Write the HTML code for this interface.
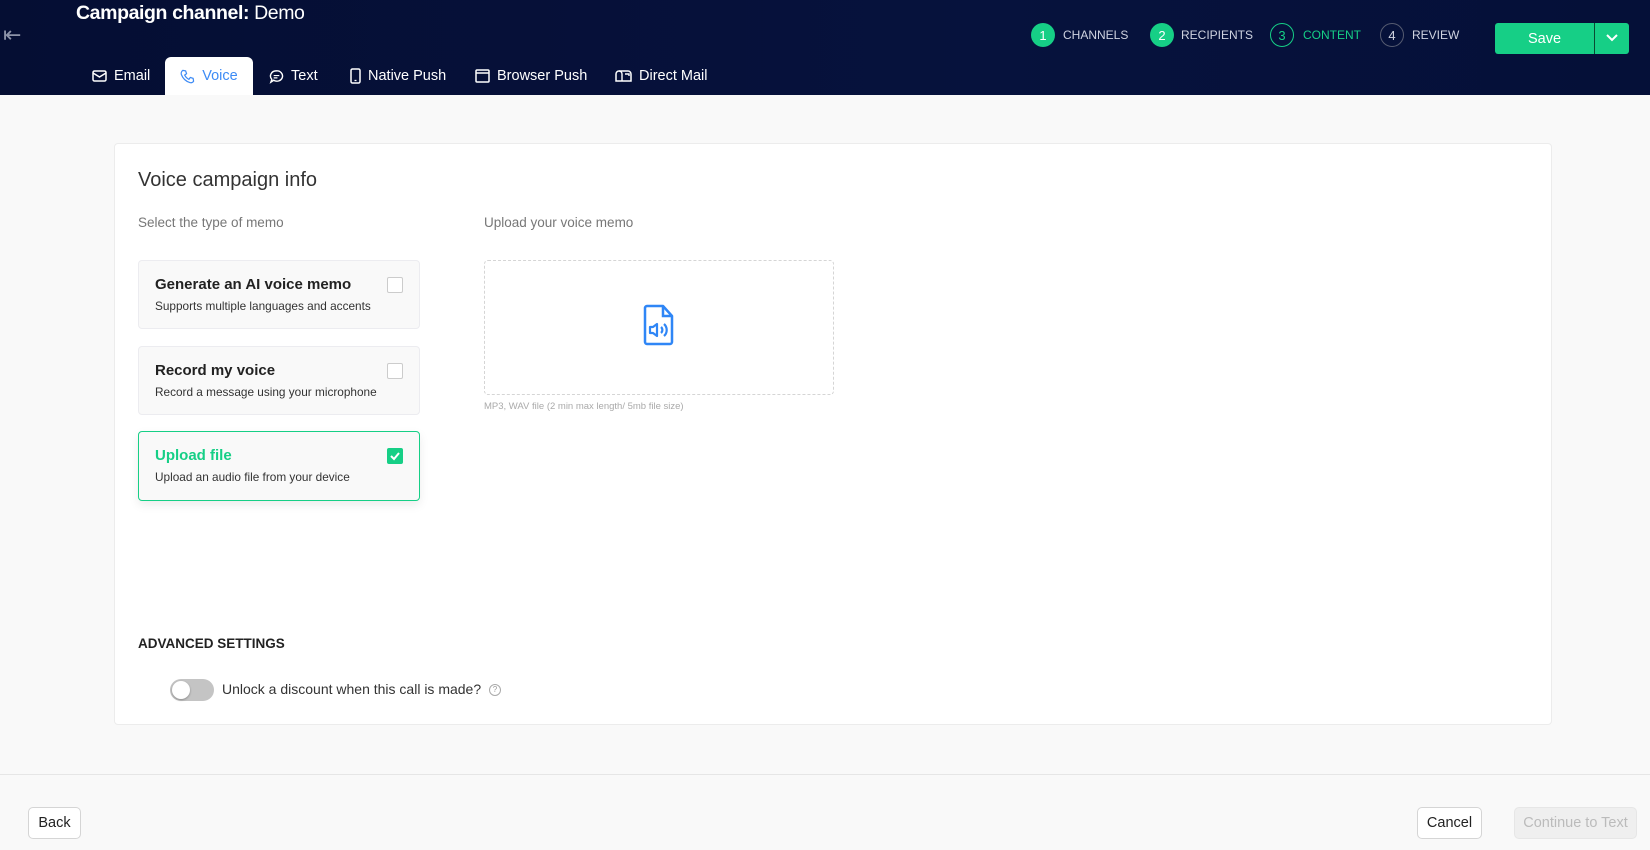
<!DOCTYPE html>
<html><head><meta charset="utf-8"><style>
*{box-sizing:border-box;margin:0;padding:0}
body{width:1650px;height:850px;overflow:hidden;background:#f9f9f9;font-family:"Liberation Sans",sans-serif;color:#222;position:relative}
.hdr{position:absolute;left:0;top:0;width:1650px;height:95px;background:linear-gradient(90deg,#050e33,#06123d 60%,#051038)}
.abs{position:absolute}
.title{left:76px;top:2px;font-size:19.5px;color:#fff;letter-spacing:-0.4px}
.tab{top:57px;height:38px;font-size:14.5px;color:#fff;display:flex;align-items:center}
.tab svg{margin-right:7px}
.vt{left:165px;width:88px;background:#fff;border-radius:6px 6px 0 0;color:#3d8bf5;justify-content:center}
.circ{width:24px;height:24px;border-radius:50%;background:#16cf86;color:#fff;font-size:13px;display:flex;align-items:center;justify-content:center;top:23px}
.st{top:28px;font-size:12px;color:#cfd3e0}
.card{left:114px;top:143px;width:1438px;height:582px;background:#fff;border:1px solid #ececec;border-radius:4px}
.opt{left:138px;width:282px;background:#f9f9f9;border:1px solid #ececf0;border-radius:4px}
.opt b{position:absolute;left:16px;top:15px;font-size:15px;color:#222}
.opt span{position:absolute;left:16px;top:38px;font-size:11.8px;color:#333}
.cb{position:absolute;right:16px;top:16px;width:16px;height:16px;border:1px solid #ccc;border-radius:2px;background:#fff}
.btn{border:1px solid #d5d5d5;border-radius:5px;background:#fff;font-size:14.5px;display:flex;align-items:center;justify-content:center;top:807px;height:32px}
</style></head><body>
<div class="hdr"></div>
<div class="abs" style="left:3px;top:22px;color:#8d93a8;font-size:22px">⇤</div>
<div class="abs title"><b>Campaign channel:</b> Demo</div>

<div class="abs tab" style="left:92px"><svg width="15" height="12" viewBox="0 0 15 12"><rect x="1" y="1" width="13" height="10" rx="1.5" fill="none" stroke="#fff" stroke-width="1.5"/><path d="M1 3l6.5 4L14 3" fill="none" stroke="#fff" stroke-width="1.5"/></svg>Email</div>
<div class="abs tab vt"><svg width="15" height="15" viewBox="0 0 16 16"><path d="M3 1.5l3 .5 1 3-2 1.5c1 2 2.5 3.5 4.5 4.5L11 9l3 1 .5 3c-1 1.5-2.5 2-4 1.5C6 13 3 10 1.5 6 1 4.5 1.5 2.5 3 1.5z" fill="none" stroke="#3d8bf5" stroke-width="1.3"/></svg>Voice</div>
<div class="abs tab" style="left:269px"><svg width="15" height="15" viewBox="0 0 16 16"><path d="M8 2a6 5.5 0 1 1-3 10L2 14l1-3A6 5.5 0 0 1 8 2z" fill="none" stroke="#fff" stroke-width="1.5"/><path d="M5 7h6M5 9.5h4" stroke="#fff" stroke-width="1.3"/></svg>Text</div>
<div class="abs tab" style="left:350px"><svg width="11" height="16" viewBox="0 0 11 16"><rect x="1" y="1" width="9" height="14" rx="1.5" fill="none" stroke="#fff" stroke-width="1.5"/><path d="M4.5 12.5h2" stroke="#fff" stroke-width="1.3"/></svg>Native Push</div>
<div class="abs tab" style="left:475px"><svg width="15" height="14" viewBox="0 0 15 14"><rect x="1" y="1" width="13" height="12" rx="1" fill="none" stroke="#fff" stroke-width="1.5"/><path d="M1 4h13" stroke="#fff" stroke-width="1.5"/></svg>Browser Push</div>
<div class="abs tab" style="left:615px"><svg width="17" height="14" viewBox="0 0 17 14"><path d="M4 2h9a3 3 0 0 1 3 3v7H1V5a3 3 0 0 1 3-3z" fill="none" stroke="#fff" stroke-width="1.5"/><path d="M7 12V5a3 3 0 0 0-3-3M10 5h4v2" fill="none" stroke="#fff" stroke-width="1.4"/></svg>Direct Mail</div>

<div class="abs circ" style="left:1031px">1</div><div class="abs st" style="left:1063px">CHANNELS</div>
<div class="abs circ" style="left:1150px">2</div><div class="abs st" style="left:1181px">RECIPIENTS</div>
<div class="abs circ" style="left:1270px;background:none;border:1px solid #16cf86;color:#16cf86">3</div><div class="abs st" style="left:1303px;color:#16cf86">CONTENT</div>
<div class="abs circ" style="left:1380px;background:none;border:1px solid #555b70;color:#cfd3e0">4</div><div class="abs st" style="left:1412px">REVIEW</div>
<div class="abs" style="left:1495px;top:23px;width:134px;height:31px;background:#16cf86;border-radius:3px"></div>
<div class="abs" style="left:1495px;top:23px;width:99px;height:31px;color:#fff;font-size:14.5px;display:flex;align-items:center;justify-content:center">Save</div>
<div class="abs" style="left:1594px;top:23px;width:1px;height:31px;background:#0a4a33"></div>
<svg class="abs" style="left:1605px;top:33px" width="14" height="10" viewBox="0 0 14 10"><path d="M2 2l5 5 5-5" fill="none" stroke="#fff" stroke-width="2"/></svg>

<div class="abs card"></div>
<div class="abs" style="left:138px;top:169px;font-size:20px;color:#333">Voice campaign info</div>
<div class="abs" style="left:138px;top:215px;font-size:13.5px;color:#777">Select the type of memo</div>
<div class="abs" style="left:484px;top:215px;font-size:13.5px;color:#777">Upload your voice memo</div>

<div class="abs opt" style="top:260px;height:69px"><b>Generate an AI voice memo</b><span>Supports multiple languages and accents</span><div class="cb"></div></div>
<div class="abs opt" style="top:346px;height:69px"><b>Record my voice</b><span>Record a message using your microphone</span><div class="cb"></div></div>
<div class="abs opt" style="top:431px;height:70px;border-color:#16cf86;box-shadow:0 4px 10px rgba(0,0,0,.08)"><b style="color:#16cf86">Upload file</b><span>Upload an audio file from your device</span><div class="cb" style="background:#16cf86;border-color:#16cf86"><svg width="14" height="14" viewBox="0 0 14 14" style="position:absolute;left:0;top:0"><path d="M3 7l3 3 5-6" fill="none" stroke="#fff" stroke-width="2"/></svg></div></div>

<div class="abs" style="left:484px;top:260px;width:350px;height:135px;border:1px dashed #d5d5d5;border-radius:4px"></div>
<svg class="abs" style="left:643px;top:304px" width="32" height="42" viewBox="0 0 32 42"><path d="M4 2h16l9 10v26a2 2 0 0 1-2 2H4a2 2 0 0 1-2-2V4a2 2 0 0 1 2-2z" fill="none" stroke="#2f86f6" stroke-width="2.5" stroke-linejoin="round"/><path d="M20 2v10h9" fill="none" stroke="#2f86f6" stroke-width="2.5"/><path d="M7 23h3l4-3v12l-4-3H7z" fill="none" stroke="#2f86f6" stroke-width="2.2" stroke-linejoin="round"/><path d="M18 23a4 4 0 0 1 0 6M21 20a8 8 0 0 1 0 12" fill="none" stroke="#2f86f6" stroke-width="2.2"/></svg>
<div class="abs" style="left:484px;top:401px;font-size:9.5px;color:#aaa">MP3, WAV file (2 min max length/ 5mb file size)</div>

<div class="abs" style="left:138px;top:636px;font-size:13.5px;font-weight:bold;color:#222">ADVANCED SETTINGS</div>
<div class="abs" style="left:170px;top:679px;width:44px;height:22px;border-radius:11px;background:#c4c4c4"></div>
<div class="abs" style="left:172px;top:681px;width:18px;height:18px;border-radius:50%;background:#fff;box-shadow:0 1px 2px rgba(0,0,0,.3)"></div>
<div class="abs" style="left:222px;top:681px;font-size:14px;color:#333">Unlock a discount when this call is made?</div>
<div class="abs" style="left:489px;top:684px;width:12px;height:12px;border:1px solid #aaa;border-radius:50%;font-size:8px;color:#999;text-align:center;line-height:10px">?</div>

<div class="abs" style="left:0;top:774px;width:1650px;height:1px;background:#e6e6e6"></div>
<div class="abs btn" style="left:28px;width:53px">Back</div>
<div class="abs btn" style="left:1417px;width:65px">Cancel</div>
<div class="abs btn" style="left:1514px;width:123px;background:#efefef;border-color:#e6e6e6;color:#bbb">Continue to Text</div>
</body></html>
